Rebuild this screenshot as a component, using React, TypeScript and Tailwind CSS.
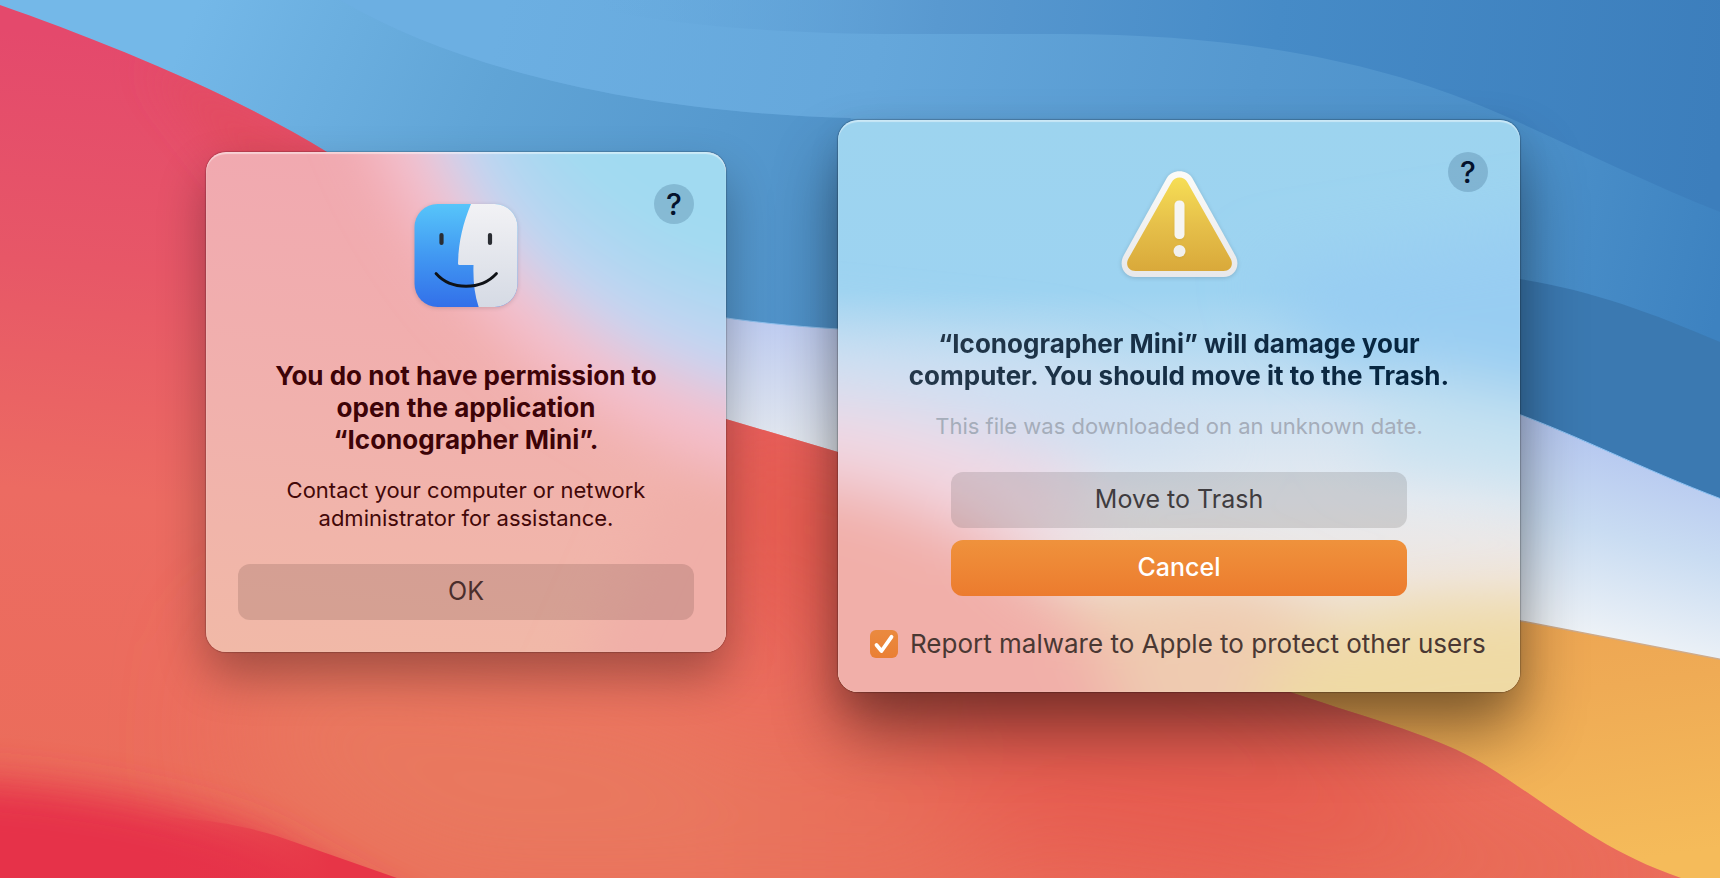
import React, { useId, useState } from "react";

function Wallpaper() {
  return (
    <svg
      className="absolute inset-0 h-full w-full"
      viewBox="0 0 1720 878"
      preserveAspectRatio="none"
      aria-hidden="true"
    >
      <defs>
        <linearGradient id="sky" gradientUnits="userSpaceOnUse" x1="60" y1="0" x2="1720" y2="200">
          <stop offset="0" stopColor="#7bbdec" />
          <stop offset="0.2" stopColor="#68aadf" />
          <stop offset="0.42" stopColor="#5e9fd4" />
          <stop offset="0.7" stopColor="#468bc7" />
          <stop offset="1" stopColor="#3c7ebc" />
        </linearGradient>
        <linearGradient id="skyFade" gradientUnits="userSpaceOnUse" x1="600" y1="0" x2="1720" y2="120">
          <stop offset="0" stopColor="#65a8dc" stopOpacity="0" />
          <stop offset="0.3" stopColor="#5999d0" />
          <stop offset="0.6" stopColor="#468bc7" />
          <stop offset="1" stopColor="#3c7ebc" />
        </linearGradient>
        <linearGradient id="skyLow" gradientUnits="userSpaceOnUse" x1="200" y1="0" x2="900" y2="300">
          <stop offset="0" stopColor="#74b8e8" />
          <stop offset="0.4" stopColor="#60a4d6" />
          <stop offset="1" stopColor="#4c8ec6" />
        </linearGradient>
        <linearGradient id="swell" gradientUnits="userSpaceOnUse" x1="500" y1="20" x2="1720" y2="300">
          <stop offset="0" stopColor="#6cafe2" />
          <stop offset="0.3" stopColor="#65a7db" />
          <stop offset="0.6" stopColor="#5598cf" />
          <stop offset="0.85" stopColor="#4a8fc9" />
          <stop offset="1" stopColor="#3d82c0" />
        </linearGradient>
        <linearGradient id="foam" gradientUnits="userSpaceOnUse" x1="1640" y1="450" x2="1590" y2="640">
          <stop offset="0" stopColor="#b6c8f0" />
          <stop offset="0.45" stopColor="#c9dcf2" />
          <stop offset="1" stopColor="#eff3f7" />
        </linearGradient>
        <linearGradient id="foamLeft" gradientUnits="userSpaceOnUse" x1="780" y1="320" x2="770" y2="440">
          <stop offset="0" stopColor="#bfcdf2" />
          <stop offset="1" stopColor="#e3e8f0" />
        </linearGradient>
        <linearGradient id="sand" x1="0" y1="0" x2="0.2" y2="1">
          <stop offset="0" stopColor="#eb9f50" />
          <stop offset="0.5" stopColor="#efab55" />
          <stop offset="1" stopColor="#f5bb5a" />
        </linearGradient>
        <linearGradient id="coral" gradientUnits="userSpaceOnUse" x1="130" y1="40" x2="60" y2="800">
          <stop offset="0" stopColor="#e4496c" />
          <stop offset="0.3" stopColor="#e75767" />
          <stop offset="0.6" stopColor="#ec6b62" />
          <stop offset="1" stopColor="#eb6d5a" />
        </linearGradient>
        <filter id="soft20" x="-50%" y="-50%" width="200%" height="200%">
          <feGaussianBlur stdDeviation="20" />
        </filter>
        <filter id="soft60" x="-50%" y="-50%" width="200%" height="200%">
          <feGaussianBlur stdDeviation="60" />
        </filter>
        <clipPath id="coralClip">
          <path d="M0 5C100 40 230 92 327 152C480 250 600 380 726 419L838 452C1000 505 1150 640 1290 692C1380 722 1440 737 1487 766C1560 812 1600 850 1681 878H0Z" />
        </clipPath>
        <linearGradient id="crimsonFade" gradientUnits="userSpaceOnUse" x1="150" y1="0" x2="330" y2="0">
          <stop offset="0" stopColor="#e63449" stopOpacity="0" />
          <stop offset="1" stopColor="#e73547" />
        </linearGradient>
      </defs>

      <rect width="1720" height="878" fill="url(#sky)" />
      <path d="M0 0H340C460 70 640 112 850 118L1000 330H0Z" fill="url(#skyLow)" />
      <path
        d="M340 0C460 70 640 112 850 118L1520 281L1720 342V0Z"
        fill="url(#swell)"
      />
      {/* upper edge of the swell fades in from the left */}
      <path
        d="M560 0C640 22 760 34 900 34H1060C1240 34 1380 62 1491 110C1560 140 1640 180 1720 212V0Z"
        fill="url(#skyFade)"
      />
      <path d="M900 240L1520 279C1590 290 1650 312 1720 342V520H900Z" fill="#3b79b1" />

      <path
        d="M700 314C750 322 790 326 838 329L1100 520L900 520L700 440Z"
        fill="url(#foamLeft)"
        stroke="#8fc0ee"
      />
      <path
        d="M1400 380C1440 392 1480 401 1521 415C1590 441 1650 473 1740 506V680H1400Z"
        fill="url(#foam)"
        stroke="#8fc4f5"
      />
      <path d="M1250 560L1521 621L1740 663V900H1250Z" fill="url(#sand)" stroke="#cfab8a" strokeWidth="1.500" />

      <g clipPath="url(#coralClip)">
        <rect width="1720" height="878" fill="url(#coral)" />
        <g filter="url(#soft60)">
          <path d="M700 380L1300 640L1450 800L1300 900L1000 860L820 620L700 600Z" fill="#e65c50" />
          <path d="M260 640L700 700L860 900H440L240 780Z" fill="#e9785f" />
          <path d="M780 700L960 780L980 900H780Z" fill="#e8705a" />
          <path d="M1330 830L1560 830L1680 900H1300Z" fill="#e66b52" />
        </g>
        <path d="M150 60L330 152L360 260L250 190Z" fill="#e24c5e" filter="url(#soft20)" />
        <path d="M-80 778C50 782 170 800 265 838L430 930H-80Z" fill="#e6334a" filter="url(#soft20)" />
        <path d="M0 825C110 812 200 812 277 836L397 878H0Z" fill="url(#crimsonFade)" />
      </g>
    </svg>
  );
}

function FinderIcon() {
  return (
    <svg viewBox="0 0 128 128" className="size-32 overflow-visible drop-shadow-sm" aria-hidden="true">
      <defs>
        <linearGradient id="finderBlue" x1="0" y1="0" x2="0" y2="1">
          <stop offset="0" stopColor="#57c5fa" />
          <stop offset="0.5" stopColor="#4198f2" />
          <stop offset="1" stopColor="#326fe9" />
        </linearGradient>
        <linearGradient id="finderWhite" x1="0" y1="0" x2="0" y2="1">
          <stop offset="0" stopColor="#f2f2f5" />
          <stop offset="1" stopColor="#d5dae4" />
        </linearGradient>
        <clipPath id="finderClip">
          <rect x="12.500" y="12" width="103" height="103" rx="23" />
        </clipPath>
      </defs>
      <g clipPath="url(#finderClip)">
        <rect x="12" y="12" width="104" height="104" fill="url(#finderBlue)" />
        <path
          d="M69 12C61 31 56.5 50 56 71.5Q56 73 57.5 73H71.5C71 89 72.5 103 77 116H116V12Z"
          fill="url(#finderWhite)"
        />
      </g>
      <path d="M39.500 43v8M88 43v8" stroke="#2a2d33" strokeWidth="4.200" strokeLinecap="round" />
      <path d="M34 81.500C49 98.500 79 98.500 94.500 81.500" fill="none" stroke="#0f1216" strokeWidth="2.800" strokeLinecap="round" />
    </svg>
  );
}

function WarningIcon() {
  return (
    <svg viewBox="0 0 128 128" className="size-32 overflow-visible drop-shadow-sm" aria-hidden="true">
      <defs>
        <linearGradient id="warnFill" x1="0" y1="0" x2="0" y2="1">
          <stop offset="0" stopColor="#f6de55" />
          <stop offset="0.5" stopColor="#e6c04a" />
          <stop offset="1" stopColor="#d9a93a" />
        </linearGradient>
        <linearGradient id="warnEdge" x1="0" y1="0" x2="0" y2="1">
          <stop offset="0" stopColor="#fbfbf8" />
          <stop offset="1" stopColor="#e8e8ea" />
        </linearGradient>
      </defs>
      <path
        d="M51.500 18.500C57 8.800 72 8.800 77.500 18.500L120.300 95.500C126 106 119.500 117 108.500 117H20.500C9.500 117 3 106 8.700 95.500Z"
        fill="url(#warnEdge)"
      />
      <path
        d="M56.500 22.500C60 15.800 69 15.800 72.500 22.500L115.500 98.500C119 105 115.500 111 108.500 111H20.500C13.500 111 10 105 13.500 98.500Z"
        fill="url(#warnFill)"
      />
      <g className="drop-shadow-xs">
        <rect x="59.500" y="40.500" width="10" height="38.500" rx="4.600" fill="#f6f5f2" />
        <circle cx="64.500" cy="91" r="6" fill="#f1f0ee" />
      </g>
    </svg>
  );
}

// frosted backdrop of the permission window
function RoseGlass() {
  return (
    <svg className="absolute inset-0 -z-10 h-full w-full" viewBox="0 0 520 500" preserveAspectRatio="none" aria-hidden="true">
      <defs>
        <linearGradient id="roseBase" x1="0.1" y1="0" x2="0" y2="1">
          <stop offset="0" stopColor="#f1a9b0" />
          <stop offset="0.5" stopColor="#f1b1ad" />
          <stop offset="1" stopColor="#f1b9a7" />
        </linearGradient>
        <filter id="roseBlur" filterUnits="userSpaceOnUse" x="-150" y="-150" width="820" height="800">
          <feGaussianBlur stdDeviation="26" />
        </filter>
      </defs>
      <rect width="520" height="500" fill="url(#roseBase)" />
      <g filter="url(#roseBlur)">
        <path d="M460 330L600 300V600H340Z" fill="#f0afa8" />
        <path d="M140 -80C180 60 260 160 350 230C420 280 510 325 640 345V-80Z" fill="#f4bfcc" />
        <path d="M205 -80C235 40 300 120 390 180C440 215 530 255 640 270V-80Z" fill="#c8d4f1" />
        <path d="M250 -80C275 30 330 90 410 135C460 165 530 190 640 215V-80Z" fill="#b0d7f2" />
        <path d="M290 -80C330 20 380 50 440 90C490 120 550 130 640 140V-80Z" fill="#a1daf1" />
      </g>
    </svg>
  );
}

// frosted backdrop of the malware window
function SkyGlass() {
  return (
    <svg className="absolute inset-0 -z-10 h-full w-full" viewBox="0 0 682 572" preserveAspectRatio="none" aria-hidden="true">
      <defs>
        <linearGradient id="skyBase" x1="0" y1="0" x2="0" y2="1">
          <stop offset="0" stopColor="#9dd4ef" />
          <stop offset="0.3" stopColor="#9dd3f1" />
          <stop offset="0.5" stopColor="#cfe2f2" />
          <stop offset="0.66" stopColor="#e6eaf0" />
          <stop offset="0.8" stopColor="#efe6e0" />
          <stop offset="1" stopColor="#efd9ae" />
        </linearGradient>
        <filter id="skyBlur" filterUnits="userSpaceOnUse" x="-200" y="-200" width="1080" height="980">
          <feGaussianBlur stdDeviation="32" />
        </filter>
      </defs>
      <rect width="682" height="572" fill="url(#skyBase)" />
      <g filter="url(#skyBlur)">
        <path d="M420 150L800 90V290L640 280L480 230Z" fill="#98cdf2" />
        <path d="M-80 210L220 240L400 330L-80 330Z" fill="#cfdff2" />
        <path d="M-100 275C40 280 160 320 240 350L260 410L-100 420Z" fill="#f2d8e3" />
        <path d="M560 250L800 300V390L520 330Z" fill="#c6e2f1" />
        <path d="M200 480L400 460L500 510V700H200Z" fill="#efcbb0" />
        <path d="M430 540L580 490L800 480V700H410Z" fill="#efdaa4" />
        <path d="M-100 355C20 355 80 385 130 410C210 445 280 510 310 700H-100Z" fill="#f1afa9" />
      </g>
    </svg>
  );
}

function HelpButton() {
  return (
    <button
      type="button"
      aria-label="Help"
      className="flex size-10 items-center justify-center justify-self-end rounded-full bg-[#1e4a6e]/22 text-[30px] leading-8 font-medium text-[#04122c]"
    >
      ?
    </button>
  );
}

type AlertWindowProps = {
  icon: React.ReactNode;
  glass: React.ReactNode;
  title: string;
  message: string;
  className: string;
  titleClass: string;
  messageClass: string;
  children: React.ReactNode;
};

function AlertWindow({ icon, glass, title, message, className, titleClass, messageClass, children }: AlertWindowProps) {
  const id = useId();
  return (
    <section
      role="alertdialog"
      aria-labelledby={id}
      className={`absolute isolate overflow-hidden rounded-[20px] p-8 ${className}`}
    >
      {glass}
      <div className="pointer-events-none absolute inset-0 rounded-[20px] shadow-[inset_0_2px_1px_rgba(255,255,255,0.45),inset_0_0_1px_rgba(255,255,255,0.4)]" />
      <div className="grid grid-cols-[1fr_auto_1fr] items-start">
        <span />
        <div className="mt-2">{icon}</div>
        <HelpButton />
      </div>
      <h2 id={id} className={`mx-auto mt-10 text-center text-[26px] leading-8 font-bold ${titleClass}`}>
        {title}
      </h2>
      <p className={`mx-auto mt-5 text-center text-[22px] leading-7 ${messageClass}`}>{message}</p>
      {children}
    </section>
  );
}

export default function App() {
  const [report, setReport] = useState(true);

  return (
    <main className="relative min-h-screen w-full overflow-hidden font-[Inter,'Liberation_Sans',sans-serif]">
      <Wallpaper />

      <AlertWindow
        icon={<FinderIcon />}
        glass={<RoseGlass />}
        title="You do not have permission to open the application “Iconographer Mini”."
        message="Contact your computer or network administrator for assistance."
        className="top-[152px] left-[206px] w-[520px] shadow-[0_0_1px_1px_rgba(0,0,0,0.18),0_24px_48px_rgba(0,0,0,0.3)]"
        titleClass="max-w-[400px] text-[#3d0307]"
        messageClass="max-w-[400px] text-[#430808]"
      >
        <button type="button" className="mt-8 block h-14 w-full rounded-xl bg-[#5a3a30]/18 text-[25px] text-[#4a2e2c]">
          OK
        </button>
      </AlertWindow>

      <AlertWindow
        icon={<WarningIcon />}
        glass={<SkyGlass />}
        title="“Iconographer Mini” will damage your computer. You should move it to the Trash."
        message="This file was downloaded on an unknown date."
        className="top-[120px] left-[838px] w-[682px] shadow-[0_0_1px_1px_rgba(0,0,0,0.22),0_40px_64px_rgba(0,0,0,0.42),0_12px_32px_rgba(0,0,0,0.1)]"
        titleClass="max-w-[580px] bg-linear-to-r from-[#25384a] to-[#02233f] bg-clip-text text-transparent"
        messageClass="text-[#a5adba]"
      >
        <div className="mx-auto mt-8 flex w-[456px] flex-col gap-3">
          <button type="button" className="h-14 rounded-xl bg-[#55504e]/18 text-[25px] text-[#3f3c3f]">
            Move to Trash
          </button>
          <button
            type="button"
            className="h-14 rounded-xl bg-linear-to-b from-[#ef923c] to-[#ec7b2e] text-[25px] font-medium text-white"
          >
            Cancel
          </button>
        </div>
        <label className="mt-8 flex items-center gap-3 text-[26px] leading-8 whitespace-nowrap text-[#4a3833]">
          <span className="relative size-7 shrink-0">
            <input
              type="checkbox"
              checked={report}
              onChange={(e) => setReport(e.target.checked)}
              className="block size-7 appearance-none rounded-md bg-white/60 checked:bg-linear-to-b checked:from-[#ea8a3f] checked:to-[#ea7f34]"
            />
            {report && (
              <svg viewBox="0 0 28 28" className="pointer-events-none absolute inset-0 size-7" aria-hidden="true">
                <path d="M6.500 15L11.500 21L21.500 6.800" fill="none" stroke="#fff" strokeWidth="3.800" strokeLinecap="round" strokeLinejoin="round" />
              </svg>
            )}
          </span>
          Report malware to Apple to protect other users
        </label>
      </AlertWindow>
    </main>
  );
}
